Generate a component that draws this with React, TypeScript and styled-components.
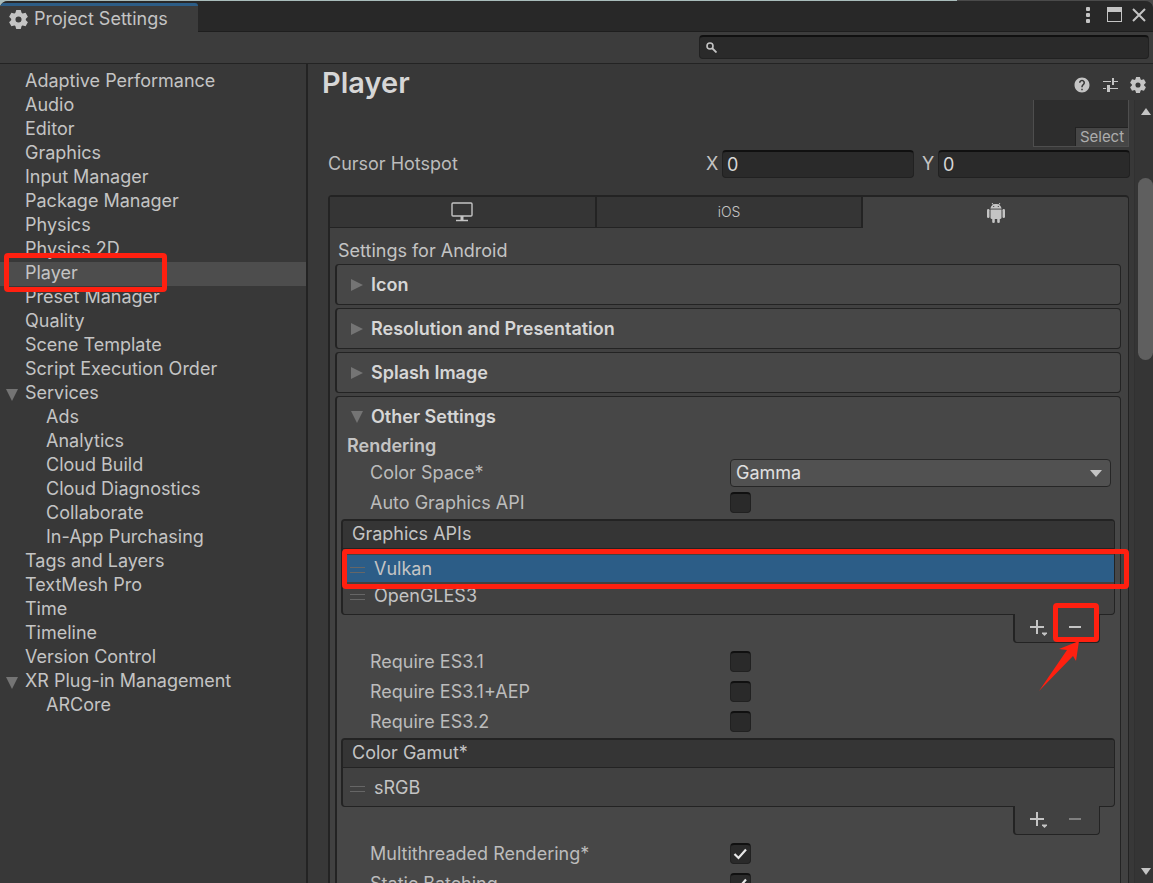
import React from "react";
import styled, { createGlobalStyle, css } from "styled-components";
import { MdHelp } from "react-icons/md";

const c = {
  chrome: "#282828",
  bar: "#3c3c3c",
  body: "#383838",
  line: "#232323",
  card: "#414141",
  section: "#474747",
  sunken: "#353535",
  field: "#2a2a2a",
  text: "#c4c4c4",
  bright: "#d6d6d6",
  label: "#bcbcbc",
  mute: "#747474",
  select: "#2c5d87",
  mark: "#ff2010",
};

const GlobalStyle = createGlobalStyle`
  * { box-sizing: border-box; }
  body {
    margin: 0;
    background: linear-gradient(to right, #a9bcbb 83%, #4a4a4a 83%);
    font-family: Inter, "Liberation Sans", sans-serif;
    font-size: 18px;
    line-height: 24px;
    color: ${c.text};
  }
  button, input, select { font: inherit; color: inherit; }
  button { padding: 0; border: 0; background: none; }
`;

/* ---------- window frame ---------- */

const Window = styled.div`
  height: 100vh;
  border-top: 1px solid transparent;
  background-clip: padding-box;
  background-color: ${c.body};
  border-radius: 8px 8px 0 0;
  overflow: hidden;
  display: flex;
  flex-direction: column;
`;

const TitleBar = styled.header`
  flex: none;
  height: 31px;
  display: flex;
  justify-content: space-between;
  background: ${c.chrome};
`;

const WindowTab = styled.h1`
  margin: 2px 0 0;
  padding: 0 30px 0 9px;
  display: flex;
  align-items: center;
  gap: 6px;
  border-top: 3px solid ${c.select};
  border-radius: 3px 3px 0 0;
  background: ${c.bar};
  color: ${c.text};
  font-size: 18px;
  font-weight: 400;
`;

const WindowButtons = styled.div`
  flex: 1;
  display: flex;
  justify-content: flex-end;
  align-items: center;
  gap: 7px;
  padding: 0 5px 2px 0;
  border-bottom: 1px solid #1e1e1e;
`;

const IconButton = styled.button`
  display: grid;
  place-items: center;
  width: 18px;
  height: 18px;
  color: ${c.text};
`;

const Toolbar = styled.div`
  flex: none;
  height: 32px;
  padding: 3px 4px 4px;
  display: flex;
  justify-content: flex-end;
  background: ${c.bar};
  border-bottom: 1px solid ${c.line};
`;

const sunken = css`
  background: ${c.field};
  border: 1px solid #212121;
  border-top: 2px solid #101010;
  border-radius: 4px;
`;

const SearchBox = styled.label`
  ${sunken}
  width: 450px;
  display: flex;
  align-items: center;
  gap: 6px;
  padding: 0 6px;
`;

const SearchInput = styled.input`
  flex: 1;
  min-width: 0;
  height: 20px;
  border: 0;
  padding: 0;
  background: none;
  outline: none;
`;

const Panes = styled.div`
  flex: 1;
  min-height: 0;
  display: flex;
`;

/* ---------- category list ---------- */

const Sidebar = styled.nav`
  flex: none;
  width: 308px;
  padding-top: 6px;
  border-right: 2px solid ${c.line};
`;

const Category = styled.a<{ $depth: number; $active?: boolean }>`
  position: relative;
  display: flex;
  align-items: center;
  height: 24px;
  padding: 0 0 2px ${(p) => (p.$depth ? 46 : 25)}px;
  color: ${c.text};
  text-decoration: none;
  white-space: nowrap;
  background: ${(p) => (p.$active ? "#4d4d4d" : "transparent")};
`;

const CategoryArrow = styled.span`
  position: absolute;
  left: 6px;
  top: 7px;
  display: flex;
`;

/* Red outline laid over a control to point it out */
const Mark = styled.span<{ $inset: string; $width?: number }>`
  position: absolute;
  z-index: 2;
  inset: ${(p) => p.$inset};
  ${(p) => p.$width && `width: ${p.$width}px;`}
  border: 5px solid ${c.mark};
  border-radius: 4px;
  pointer-events: none;
`;

const PointerArrow = styled.svg`
  position: absolute;
  z-index: 2;
  top: 27px;
  left: -18px;
  pointer-events: none;
`;

/* ---------- inspector ---------- */

const Inspector = styled.main`
  flex: 1;
  min-width: 0;
  display: flex;
  flex-direction: column;
`;

const InspectorHeader = styled.div`
  flex: none;
  height: 36px;
  display: flex;
  justify-content: space-between;
  align-items: center;
  padding: 2px 6px 0 14px;
`;

const Title = styled.h2`
  margin: 0;
  font-size: 29px;
  line-height: 32px;
  font-weight: 600;
  color: ${c.bright};
`;

const HeaderIcons = styled.div`
  display: flex;
  gap: 10px;
  padding-top: 4px;
`;

const ScrollArea = styled.div`
  flex: 1;
  min-height: 0;
  display: flex;
`;

const Content = styled.div`
  flex: 1;
  min-width: 0;
  overflow: hidden;
  padding: 0 4px 0 20px;
`;

const Texture = styled.div`
  margin: 0 1px 0 auto;
  width: 96px;
  height: 47px;
  display: flex;
  justify-content: flex-end;
  align-items: flex-end;
  background: #2d2d2d;
  border: 1px solid #4e4e4e;
  border-top: 0;
`;

const SelectButton = styled.button`
  width: 53px;
  height: 19px;
  border: 1px solid #222;
  border-width: 1px 0 0 1px;
  background: #464646;
  color: #adadad;
  font-size: 15px;
  line-height: 16px;
`;

const HotspotRow = styled.div`
  display: flex;
  gap: 8px;
  padding-top: 3px;
  height: 31px;
`;

const HotspotLabel = styled.span`
  flex: 0 0 370px;
  line-height: 28px;
  color: ${c.label};
`;

const Axis = styled.label`
  flex: 1;
  min-width: 0;
  display: flex;
  line-height: 28px;
`;

const AxisName = styled.span`
  flex: 0 0 16px;
`;

const NumberInput = styled.input`
  ${sunken}
  flex: 1;
  min-width: 0;
  padding: 0 4px;
  color: ${c.bright};
`;

const Platform = styled.section`
  margin: 17px 1px 0 0;
  border: 2px solid ${c.line};
  border-right-width: 1px;
  border-bottom: 0;
  border-radius: 4px 4px 0 0;
  background: ${c.card};
`;

const PlatformTabs = styled.div`
  display: flex;
`;

const PlatformTab = styled.button<{ $active?: boolean }>`
  flex: 1 1 0;
  height: 31px;
  display: grid;
  place-items: center;
  font-size: 14px;
  font-weight: 300;
  background: ${(p) => (p.$active ? "transparent" : c.sunken)};
  ${(p) =>
    !p.$active &&
    css`
      border-right: 2px solid ${c.line};
      border-bottom: 1px solid ${c.line};
    `}
`;

const PlatformTitle = styled.p`
  margin: 0;
  padding: 11px 8px 1px;
`;

const Sections = styled.div`
  display: flex;
  flex-direction: column;
  gap: 3px;
  padding: 0 7px 0 5px;
`;

const Section = styled.section`
  border: 1px solid ${c.line};
  border-left-width: 2px;
  border-radius: 4px;
  background: ${c.section};
`;

const SectionHeader = styled.button`
  width: 100%;
  height: 39px;
  padding: 0 14px;
  display: flex;
  align-items: center;
  gap: 8px;
  color: ${c.bright};
  font-weight: 600;
  text-align: left;
`;

const GroupTitle = styled.h3`
  margin: 0;
  padding-left: 10px;
  height: 22px;
  line-height: 20px;
  font-size: 18px;
  font-weight: 600;
`;

const FieldRow = styled.label`
  height: 30px;
  display: flex;
  align-items: center;
  padding: 0 9px 0 33px;
`;

const FieldLabel = styled.span`
  flex: 0 0 360px;
  color: ${c.label};
`;

const Dropdown = styled.span`
  position: relative;
  flex: 1;
  display: flex;
  align-items: center;
`;

const DropdownSelect = styled.select`
  appearance: none;
  width: 100%;
  height: 28px;
  padding: 0 24px 0 5px;
  border: 1px solid #262626;
  border-radius: 4px;
  background: #515151;
  color: #e0e0e0;
`;

const DropdownArrow = styled.svg`
  position: absolute;
  right: 9px;
  pointer-events: none;
`;

const Tick = styled.span`
  position: relative;
  display: flex;
  margin-bottom: 2px;
`;

const TickInput = styled.input`
  ${sunken}
  appearance: none;
  width: 21px;
  height: 21px;
  margin: 0;
`;

const TickMark = styled.svg`
  position: absolute;
  inset: 0;
  pointer-events: none;
`;

const ListBlock = styled.div`
  margin: 1px 5px 4px 4px;
`;

const ListBox = styled.div`
  border: 1px solid ${c.line};
  border-top-width: 2px;
  border-left-width: 2px;
  border-radius: 4px;
  background: ${c.card};
`;

const ListTitle = styled.div`
  height: 28px;
  line-height: 26px;
  padding-left: 9px;
  border-bottom: 1px solid ${c.line};
  border-radius: 3px 3px 0 0;
  background: ${c.sunken};
`;

const ListItems = styled.ul`
  list-style: none;
  margin: 0;
  padding: 6px 0 5px;
`;

const ListItem = styled.li<{ $active?: boolean }>`
  position: relative;
  height: 27px;
  display: flex;
  align-items: center;
  gap: 9px;
  padding-left: 7px;
  background: ${(p) => (p.$active ? c.select : "transparent")};
`;

const Grip = styled.span`
  width: 15px;
  height: 6px;
  margin-top: 3px;
  border: 1px solid #666;
  border-width: 1px 0;
`;

const ListFooter = styled.div`
  width: 87px;
  height: 29px;
  margin: -1px 15px 0 auto;
  padding: 0 6px 0 4px;
  position: relative;
  display: flex;
  border: 1px solid ${c.line};
  border-top: 0;
  border-left-width: 2px;
  border-radius: 0 0 4px 4px;
  background: ${c.card};
`;

const ListButton = styled.button`
  position: relative;
  flex: 1;
  display: grid;
  place-items: center;
  color: ${c.text};
  &:disabled { color: #808080; }
`;

const Scrollbar = styled.div`
  flex: none;
  width: 19px;
  padding: 8px 0 8px 3px;
  display: flex;
  flex-direction: column;
  align-items: center;
  background: ${c.sunken};
  border-left: 1px solid #313131;
`;

const Track = styled.div`
  flex: 1;
  width: 100%;
  padding-top: 63px;
`;

const Thumb = styled.div`
  height: 26%;
  min-height: 182px;
  border-radius: 8px;
  background: #5f5f5f;
`;

/* ---------- icons ---------- */

function Gear({ size }: { size: number }) {
  return (
    <svg width={size} height={size} viewBox="-10 -10 20 20" fill="currentColor" aria-hidden="true">
      {[0, 60, 120, 180, 240, 300].map((angle) => (
        <path key={angle} d="M-3.800 -5L-2.400 -10H2.400L3.800 -5Z" transform={`rotate(${angle})`} />
      ))}
      <circle r="5.400" fill="none" stroke="currentColor" strokeWidth="4.400" />
    </svg>
  );
}

function Robot() {
  return (
    <svg width="18" height="20" viewBox="0 0 18 20" fill="currentColor" aria-hidden="true">
      <path d="M5 0L6.500 2M13 0L11.500 2" stroke="currentColor" strokeWidth="1" />
      <path
        fillRule="evenodd"
        d="M3.500 5.600C3.700 3 6 1 9 1s5.300 2 5.500 4.600zM6.200 3v1h1V3zM10.800 3v1h1V3z"
      />
      <path d="M3.500 5.600h11v1.400h-11z" opacity="0.450" />
      <path d="M3.500 7h11v7.500q0 1.500-1.500 1.500H5q-1.500 0-1.500-1.500z" />
      <rect x="0" y="6" width="2.500" height="9" rx="1.200" />
      <rect x="15.500" y="6" width="2.500" height="9" rx="1.200" />
      <path d="M5.200 15h2.600v4q0 1-1.300 1t-1.300-1zM10.200 15h2.600v4q0 1-1.300 1t-1.300-1z" />
    </svg>
  );
}

function Triangle({ open }: { open?: boolean }) {
  return (
    <svg width="12" height="12" viewBox="0 0 12 12" fill={c.mute} aria-hidden="true">
      <path d={open ? "M0 0H12L6 12Z" : "M0 0L12 6L0 12Z"} />
    </svg>
  );
}

function Plus() {
  return (
    <svg width="20" height="20" viewBox="0 0 20 20" aria-hidden="true">
      <path d="M2 9H16M9 2V16" stroke="currentColor" strokeWidth="2" />
      <path d="M14 14.500H19V15.500L16.500 18L14 15.500Z" fill="currentColor" />
    </svg>
  );
}

function Minus() {
  return (
    <svg width="12" height="20" viewBox="0 0 12 20" aria-hidden="true">
      <path d="M0 9H12" stroke="currentColor" strokeWidth="2" />
    </svg>
  );
}

/* ---------- composed parts ---------- */

function CheckField({ label, checked }: { label: string; checked?: boolean }) {
  return (
    <FieldRow>
      <FieldLabel>{label}</FieldLabel>
      <Tick>
        <TickInput type="checkbox" defaultChecked={checked} />
        {checked && (
          <TickMark width="21" height="21" viewBox="0 0 21 21" aria-hidden="true">
            <path d="M4.500 11L8.500 15L16 6.500" fill="none" stroke="#e8e8e8" strokeWidth="2.200" />
          </TickMark>
        )}
      </Tick>
    </FieldRow>
  );
}

function ReorderList({
  title,
  items,
  active,
}: {
  title: string;
  items: string[];
  active?: string;
}) {
  return (
    <ListBlock>
      <ListBox>
        <ListTitle>{title}</ListTitle>
        <ListItems>
          {items.map((item) => (
            <ListItem key={item} $active={item === active}>
              <Grip />
              {item}
              {item === active && <Mark $inset="-6px -15px -7px -1px" />}
            </ListItem>
          ))}
        </ListItems>
      </ListBox>
      <ListFooter>
        <ListButton aria-label="Add">
          <Plus />
        </ListButton>
        <ListButton aria-label="Remove" disabled={!active}>
          <Minus />
          {active && (
            <>
              <Mark $inset="-11px -6px 0 -3px" />
              <PointerArrow width="44" height="52" viewBox="0 0 44 52" fill={c.mark} aria-hidden="true">
                <path d="M41 0L38 20L35 15L1 50L29 9L21 8Z" />
              </PointerArrow>
            </>
          )}
        </ListButton>
      </ListFooter>
    </ListBlock>
  );
}

type Entry = { name: string; depth?: number; open?: boolean };

const categories: Entry[] = [
  { name: "Adaptive Performance" },
  { name: "Audio" },
  { name: "Editor" },
  { name: "Graphics" },
  { name: "Input Manager" },
  { name: "Package Manager" },
  { name: "Physics" },
  { name: "Physics 2D" },
  { name: "Player" },
  { name: "Preset Manager" },
  { name: "Quality" },
  { name: "Scene Template" },
  { name: "Script Execution Order" },
  { name: "Services", open: true },
  { name: "Ads", depth: 1 },
  { name: "Analytics", depth: 1 },
  { name: "Cloud Build", depth: 1 },
  { name: "Cloud Diagnostics", depth: 1 },
  { name: "Collaborate", depth: 1 },
  { name: "In-App Purchasing", depth: 1 },
  { name: "Tags and Layers" },
  { name: "TextMesh Pro" },
  { name: "Time" },
  { name: "Timeline" },
  { name: "Version Control" },
  { name: "XR Plug-in Management", open: true },
  { name: "ARCore", depth: 1 },
];

const collapsed = ["Icon", "Resolution and Presentation", "Splash Image"];

export default function App() {
  return (
    <>
      <GlobalStyle />
      <Window>
        <TitleBar>
          <WindowTab>
            <Gear size={19} />
            Project Settings
          </WindowTab>
          <WindowButtons>
            <IconButton aria-label="Menu">
              <svg width="18" height="18" viewBox="0 0 18 18" fill="currentColor">
                <rect x="6" y="1" width="4" height="4" rx="1" />
                <rect x="6" y="7" width="4" height="4" rx="1" />
                <rect x="6" y="13" width="4" height="4" rx="1" />
              </svg>
            </IconButton>
            <IconButton aria-label="Maximize">
              <svg width="18" height="18" viewBox="0 0 18 18" fill="currentColor">
                <path d="M2 1h15v15h-15zM3 6v9h13v-9z" fillRule="evenodd" />
              </svg>
            </IconButton>
            <IconButton aria-label="Close">
              <svg width="18" height="18" viewBox="0 0 18 18">
                <path d="M3 3L15 15M15 3L3 15" stroke="currentColor" strokeWidth="2" />
              </svg>
            </IconButton>
          </WindowButtons>
        </TitleBar>

        <Toolbar>
          <SearchBox>
            <svg width="11" height="11" viewBox="0 0 11 11" fill="none" stroke="currentColor" aria-hidden="true">
              <circle cx="4" cy="4" r="3" strokeWidth="1.600" />
              <path d="M6 6L10.500 10.500" strokeWidth="1.800" />
            </svg>
            <SearchInput type="text" aria-label="Search" />
          </SearchBox>
        </Toolbar>

        <Panes>
          <Sidebar>
            {categories.map(({ name, depth = 0, open }) => (
              <Category key={name} href="#" $depth={depth} $active={name === "Player"}>
                {open && (
                  <CategoryArrow>
                    <Triangle open />
                  </CategoryArrow>
                )}
                {name}
                {name === "Player" && <Mark $inset="-9px auto -6px 4px" $width={163} />}
              </Category>
            ))}
          </Sidebar>

          <Inspector>
            <InspectorHeader>
              <Title>Player</Title>
              <HeaderIcons>
                <IconButton aria-label="Help">
                  <MdHelp size={18} />
                </IconButton>
                <IconButton aria-label="Presets">
                  <svg width="16" height="16" viewBox="0 0 16 16" fill="currentColor">
                    <path d="M1 4h8v1H1zM10 1h2v3h4v1h-4v3h-2zM1 11h3v1H1zM5 8h3v3h8v1H8v3H5z" />
                  </svg>
                </IconButton>
                <IconButton aria-label="Options">
                  <Gear size={16} />
                </IconButton>
              </HeaderIcons>
            </InspectorHeader>

            <ScrollArea>
              <Content>
                <Texture>
                  <SelectButton>Select</SelectButton>
                </Texture>
                <HotspotRow>
                  <HotspotLabel>Cursor Hotspot</HotspotLabel>
                  <Axis>
                    <AxisName>X</AxisName>
                    <NumberInput type="text" defaultValue="0" />
                  </Axis>
                  <Axis>
                    <AxisName>Y</AxisName>
                    <NumberInput type="text" defaultValue="0" />
                  </Axis>
                </HotspotRow>

                <Platform>
                  <PlatformTabs>
                    <PlatformTab aria-label="Desktop">
                      <svg width="22" height="20" viewBox="0 0 22 20" fill="none" stroke={c.text}>
                        <rect x="1" y="1" width="20" height="13" rx="1" strokeWidth="1.400" />
                        <path d="M11 14V18" strokeWidth="3" />
                        <path d="M5 18.500H17" strokeWidth="1.400" />
                      </svg>
                    </PlatformTab>
                    <PlatformTab>iOS</PlatformTab>
                    <PlatformTab $active aria-label="Android">
                      <Robot />
                    </PlatformTab>
                  </PlatformTabs>

                  <PlatformTitle>Settings for Android</PlatformTitle>

                  <Sections>
                    {collapsed.map((name) => (
                      <Section key={name}>
                        <SectionHeader>
                          <Triangle />
                          {name}
                        </SectionHeader>
                      </Section>
                    ))}
                    <Section>
                      <SectionHeader>
                        <Triangle open />
                        Other Settings
                      </SectionHeader>
                      <GroupTitle>Rendering</GroupTitle>
                      <FieldRow>
                        <FieldLabel>Color Space*</FieldLabel>
                        <Dropdown>
                          <DropdownSelect defaultValue="Gamma">
                            <option>Gamma</option>
                            <option>Linear</option>
                          </DropdownSelect>
                          <DropdownArrow width="12" height="7" viewBox="0 0 12 7" aria-hidden="true">
                            <path d="M0 0H12L6 7Z" fill={c.text} />
                          </DropdownArrow>
                        </Dropdown>
                      </FieldRow>
                      <CheckField label="Auto Graphics API" />
                      <ReorderList title="Graphics APIs" items={["Vulkan", "OpenGLES3"]} active="Vulkan" />
                      <CheckField label="Require ES3.1" />
                      <CheckField label="Require ES3.1+AEP" />
                      <CheckField label="Require ES3.2" />
                      <ReorderList title="Color Gamut*" items={["sRGB"]} />
                      <CheckField label="Multithreaded Rendering*" checked />
                      <CheckField label="Static Batching" checked />
                    </Section>
                  </Sections>
                </Platform>
              </Content>

              <Scrollbar>
                <svg width="10" height="7" viewBox="0 0 10 7" fill={c.text} aria-hidden="true">
                  <path d="M0 7H10L5 0Z" />
                </svg>
                <Track>
                  <Thumb />
                </Track>
                <svg width="10" height="7" viewBox="0 0 10 7" fill={c.text} aria-hidden="true">
                  <path d="M0 0H10L5 7Z" />
                </svg>
              </Scrollbar>
            </ScrollArea>
          </Inspector>
        </Panes>
      </Window>
    </>
  );
}
